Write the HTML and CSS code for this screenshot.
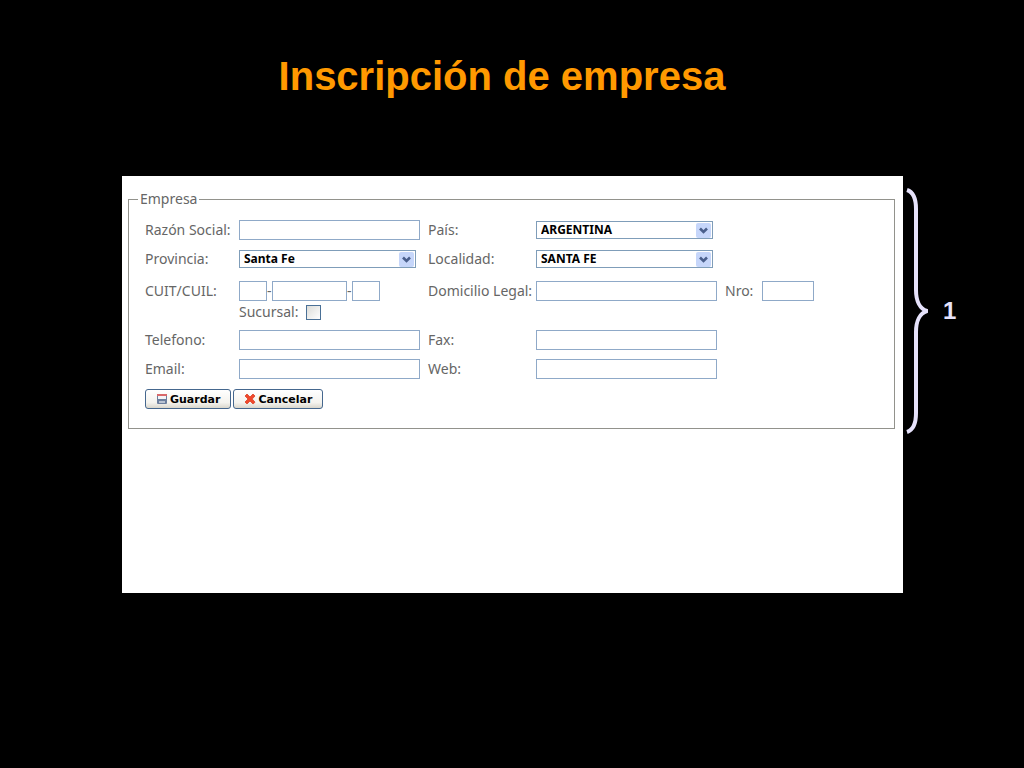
FILE: index.html
```html
<!DOCTYPE html>
<html lang="es">
<head>
    <meta charset="UTF-8">
    <meta name="viewport" content="width=device-width, initial-scale=1.0">
    <title>Inscripción de empresa</title>
    <link rel="stylesheet" href="styles.css">
</head>
<body>
    <h1 class="title">Inscripción de empresa</h1>

    <main class="slide">
        <form class="panel">
            <fieldset class="company">
                <legend>Empresa</legend>
                <div class="fields">
                    <label for="razon">Razón Social:</label>
                    <input type="text" id="razon" class="text">
                    <label for="pais">País:</label>
                    <div class="select">
                        <select id="pais"><option>ARGENTINA</option></select>
                        <svg class="arrow" viewBox="0 0 15 15"><rect width="15" height="15" rx="2" fill="#c6d6fa"/><path d="M4 5.5 7.5 9 11 5.5" fill="none" stroke="#4a5f8c" stroke-width="2.6"/></svg>
                    </div>

                    <label for="provincia" class="first">Provincia:</label>
                    <div class="select">
                        <select id="provincia"><option>Santa Fe</option></select>
                        <svg class="arrow" viewBox="0 0 15 15"><rect width="15" height="15" rx="2" fill="#c6d6fa"/><path d="M4 5.5 7.5 9 11 5.5" fill="none" stroke="#4a5f8c" stroke-width="2.6"/></svg>
                    </div>
                    <label for="localidad">Localidad:</label>
                    <div class="select">
                        <select id="localidad"><option>SANTA FE</option></select>
                        <svg class="arrow" viewBox="0 0 15 15"><rect width="15" height="15" rx="2" fill="#c6d6fa"/><path d="M4 5.5 7.5 9 11 5.5" fill="none" stroke="#4a5f8c" stroke-width="2.6"/></svg>
                    </div>

                    <label for="cuit" class="first tall">CUIT/CUIL:</label>
                    <div class="tall">
                        <div class="cuit">
                            <input type="text" id="cuit" class="text short" aria-label="CUIT/CUIL prefijo"><span>-</span><input type="text" class="text number" aria-label="CUIT/CUIL número"><span>-</span><input type="text" class="text short" aria-label="CUIT/CUIL verificador">
                        </div>
                        <div class="branch">
                            <label for="sucursal">Sucursal:</label>
                            <input type="checkbox" id="sucursal" class="check">
                        </div>
                    </div>
                    <label for="domicilio" class="tall">Domicilio Legal:</label>
                    <div class="tall">
                        <input type="text" id="domicilio" class="text">
                    </div>
                    <label for="nro" class="tall">Nro:</label>
                    <div class="tall">
                        <input type="text" id="nro" class="text nro">
                    </div>

                    <label for="telefono" class="first">Telefono:</label>
                    <input type="text" id="telefono" class="text">
                    <label for="fax">Fax:</label>
                    <input type="text" id="fax" class="text">

                    <label for="email" class="first">Email:</label>
                    <input type="text" id="email" class="text">
                    <label for="web">Web:</label>
                    <input type="text" id="web" class="text">
                </div>

                <div class="buttons">
                    <button type="button">
                        <svg class="icon" viewBox="0 0 12 12"><rect x="1" y="1" width="10" height="10" rx="1" fill="#6c7f9e"/><rect x="2" y="1" width="8" height="5" fill="#f4f4f6"/><rect x="1" y="1" width="10" height="2" fill="#d9696b"/><rect x="3" y="8" width="6" height="2" fill="#b9c3d2"/></svg>
                        Guardar
                    </button>
                    <button type="button">
                        <svg class="icon" viewBox="0 0 12 12"><path d="M3 1 6 4 9 1 11 3 8.2 6 11 9.2 9 11 6 8 3 11 1 9 4 6 1 3Z" fill="#f0492c" stroke="#e0553c"/></svg>
                        Cancelar
                    </button>
                </div>
            </fieldset>
        </form>

        <div class="note">
            <svg class="brace" viewBox="0 0 22 246"><path d="M1 2C7 4 10 11 10 21V102C10 113 14 121 21 123 14 125 10 133 10 144V225C10 235 7 242 1 244" fill="none" stroke="#e6e2fb" stroke-width="4"/></svg>
            <span>1</span>
        </div>
    </main>
</body>
</html>
```

FILE: styles.css
```css
* {
    box-sizing: border-box;
}

body {
    margin: 0;
    background-color: #000;
    font-family: "Noto Sans", Tahoma, sans-serif;
    font-size: 14px;
    line-height: 20px;
    color: #666;
}

.title {
    margin: 0;
    padding: 52px 20px 0 0;
    font-family: "Liberation Sans", Arial, sans-serif;
    font-size: 40px;
    line-height: 48px;
    text-align: center;
    color: #ff9900;
}

.slide {
    display: grid;
    grid-template-columns: 122px 1fr 121px;
    margin-top: 76px;
}

.panel {
    grid-column: 2;
    padding: 13px 8px 164px 6px;
    background-color: #fff;
}

.company {
    margin: 0;
    padding: 11px 16px 19px;
    border: 1px solid #92928c;
}

.company legend {
    margin-left: -7px;
    padding: 0 2px;
}

.fields {
    display: grid;
    grid-template-columns: 94px 189px 108px 189px 37px 1fr;
    row-gap: 9px;
}

.first {
    grid-column: 1;
}

.tall {
    padding-top: 3px;
}

.text {
    display: block;
    width: 181px;
    height: 20px;
    margin: 0;
    padding: 0 3px;
    border: 1px solid #8fa9c8;
    background-color: #fff;
}

.text.short {
    width: 28px;
}

.text.number {
    width: 75px;
}

.text.nro {
    width: 52px;
}

.cuit {
    display: flex;
}

.cuit span {
    width: 5px;
}

.branch {
    display: flex;
    align-items: center;
    gap: 8px;
    height: 20px;
    padding-top: 2px;
}

.check {
    appearance: none;
    width: 15px;
    height: 15px;
    margin: 0;
    border: 1px solid #4a7096;
    background: linear-gradient(135deg, #dcdcd8, #fff);
}

.select {
    position: relative;
    width: 177px;
    height: 20px;
    padding-top: 1px;
}

.select select {
    appearance: none;
    display: block;
    width: 100%;
    height: 18px;
    padding: 0 20px 0 4px;
    border: 1px solid #7f9db9;
    border-radius: 0;
    background-color: #fff;
    font-family: "Noto Sans", Tahoma, sans-serif;
    font-size: 12px;
    font-weight: bold;
    line-height: 16px;
    color: #000;
}

.arrow {
    position: absolute;
    top: 3px;
    right: 2px;
    width: 15px;
    height: 15px;
    pointer-events: none;
}

.buttons {
    display: flex;
    gap: 2px;
    margin-top: 10px;
}

.buttons button {
    display: flex;
    align-items: center;
    gap: 2px;
    height: 20px;
    padding: 0 10px;
    border: 1px solid #45678e;
    border-radius: 3px;
    background: linear-gradient(#fff, #f4f3ee 70%, #d9d6cc);
    font-family: "DejaVu Sans", Verdana, sans-serif;
    font-size: 11px;
    font-weight: bold;
    color: #000;
}

.icon {
    width: 12px;
    height: 12px;
}

.note {
    display: flex;
    align-items: center;
    align-self: start;
    gap: 15px;
    padding: 12px 0 0 3px;
    font-family: "Liberation Sans", Arial, sans-serif;
    font-size: 24px;
    font-weight: bold;
    color: #e6e2fb;
}

.brace {
    width: 22px;
    height: 246px;
}
```
